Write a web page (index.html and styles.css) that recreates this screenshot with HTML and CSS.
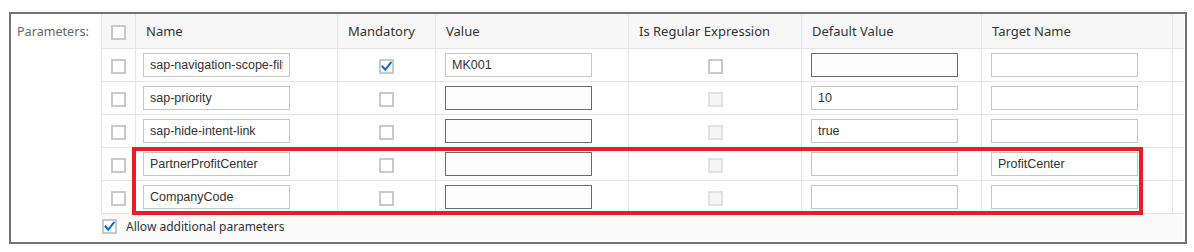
FILE: index.html
```html
<!DOCTYPE html>
<html lang="en">
<head>
    <meta charset="UTF-8">
    <title>Parameters</title>
    <link rel="stylesheet" href="styles.css">
</head>
<body>
    <div class="frame">
        <div class="label">Parameters:</div>

        <div class="section">
            <table class="params">
                <colgroup>
                    <col class="w-sel">
                    <col class="w-name">
                    <col class="w-mand">
                    <col class="w-value">
                    <col class="w-regex">
                    <col class="w-default">
                    <col class="w-target">
                    <col class="w-pad">
                </colgroup>
                <thead>
                    <tr>
                        <th class="c-sel"><span class="cb"></span></th>
                        <th>Name</th>
                        <th>Mandatory</th>
                        <th>Value</th>
                        <th>Is Regular Expression</th>
                        <th>Default Value</th>
                        <th>Target Name</th>
                        <th class="c-pad"></th>
                    </tr>
                </thead>
                <tbody>
                    <tr>
                        <td class="c-sel"><span class="cb"></span></td>
                        <td class="c-name"><input class="field" type="text" value="sap-navigation-scope-filter"></td>
                        <td class="c-center"><span class="cb checked"><svg viewBox="0 0 11 11"><path d="M1.5 5.5 L4.3 8.6 L9.8 1.6"/></svg></span></td>
                        <td><input class="field" type="text" value="MK001"></td>
                        <td class="c-center"><span class="cb"></span></td>
                        <td><input class="field empty" type="text" value=""></td>
                        <td><input class="field" type="text" value=""></td>
                        <td class="c-pad"></td>
                    </tr>
                    <tr>
                        <td class="c-sel"><span class="cb"></span></td>
                        <td class="c-name"><input class="field" type="text" value="sap-priority"></td>
                        <td class="c-center"><span class="cb"></span></td>
                        <td><input class="field empty" type="text" value=""></td>
                        <td class="c-center"><span class="cb disabled"></span></td>
                        <td><input class="field" type="text" value="10"></td>
                        <td><input class="field" type="text" value=""></td>
                        <td class="c-pad"></td>
                    </tr>
                    <tr>
                        <td class="c-sel"><span class="cb"></span></td>
                        <td class="c-name"><input class="field" type="text" value="sap-hide-intent-link"></td>
                        <td class="c-center"><span class="cb"></span></td>
                        <td><input class="field empty" type="text" value=""></td>
                        <td class="c-center"><span class="cb disabled"></span></td>
                        <td><input class="field" type="text" value="true"></td>
                        <td><input class="field" type="text" value=""></td>
                        <td class="c-pad"></td>
                    </tr>
                    <tr>
                        <td class="c-sel"><span class="cb"></span></td>
                        <td class="c-name"><input class="field" type="text" value="PartnerProfitCenter"></td>
                        <td class="c-center"><span class="cb"></span></td>
                        <td><input class="field empty" type="text" value=""></td>
                        <td class="c-center"><span class="cb disabled"></span></td>
                        <td><input class="field" type="text" value=""></td>
                        <td><input class="field" type="text" value="ProfitCenter"></td>
                        <td class="c-pad"></td>
                    </tr>
                    <tr>
                        <td class="c-sel"><span class="cb"></span></td>
                        <td class="c-name"><input class="field" type="text" value="CompanyCode"></td>
                        <td class="c-center"><span class="cb"></span></td>
                        <td><input class="field empty" type="text" value=""></td>
                        <td class="c-center"><span class="cb disabled"></span></td>
                        <td><input class="field" type="text" value=""></td>
                        <td><input class="field" type="text" value=""></td>
                        <td class="c-pad"></td>
                    </tr>
                </tbody>
            </table>

            <div class="params-footer">
                <span class="cb checked"><svg viewBox="0 0 11 11"><path d="M1.5 5.5 L4.3 8.6 L9.8 1.6"/></svg></span>
                <span class="footer-text">Allow additional parameters</span>
            </div>

            <!-- Marco rojo sobre las filas nuevas -->
            <div class="highlight"></div>
        </div>
    </div>
</body>
</html>
```

FILE: styles.css
```css
* {
    box-sizing: border-box;
}

body {
    margin: 0;
    padding: 12px 0 0 9px;
    background: #fff;
    font-family: "Noto Sans", "Open Sans", Arial, sans-serif;
    color: #333;
}

.frame {
    display: flex;
    width: 1178px;
    border: 2px solid #737373;
    padding: 0 2px 2px 0;
}

.label {
    width: 90px;
    flex: none;
    padding-left: 6px;
    line-height: 36px;
    font-size: 12.6px;
    color: #666;
}

.section {
    position: relative;
    width: 1082px;
}

/* Tabla de parámetros */
.params {
    width: 1082px;
    border-collapse: collapse;
    table-layout: fixed;
}

.w-sel { width: 34px; }
.w-name { width: 202px; }
.w-mand { width: 98px; }
.w-value { width: 193px; }
.w-regex { width: 173px; }
.w-default { width: 180px; }
.w-target { width: 191px; }
.w-pad { width: 11px; }

.params th,
.params td {
    border: 1px solid #e5e5e5;
    padding: 0 0 0 9px;
    text-align: left;
    white-space: nowrap;
}

.params th {
    height: 34px;
    border-top: none;
    background: #f7f7f7;
    font-size: 13px;
    font-weight: normal;
    color: #333;
    padding-left: 10px;
}

.params td {
    height: 33px;
    background: #fff;
}

.params .c-sel,
.params .c-center {
    padding: 0;
    text-align: center;
}

.params .c-name {
    padding-left: 7px;
}

.params .c-pad {
    border-right: none;
    padding: 0;
}

.field {
    display: block;
    width: 147px;
    height: 24px;
    margin: 0;
    padding: 0 6px;
    border: 1px solid #c6c6c6;
    background: #fff;
    font-family: "Liberation Sans", Arial, sans-serif;
    font-size: 12.5px;
    color: #333;
    outline: none;
}

.field.empty {
    border-color: #6b6b6b;
    background: #fdfdfd;
}

/* Checkbox */
.cb {
    display: inline-block;
    width: 15px;
    height: 15px;
    border: 2px solid #c9c9c9;
    background: #fff;
    vertical-align: middle;
    position: relative;
}

.cb.disabled {
    border-color: #e2e2e2;
    background: #f5f5f5;
}

.cb svg {
    position: absolute;
    left: 0;
    top: 0;
    width: 11px;
    height: 11px;
    fill: none;
    stroke: #0a6ed1;
    stroke-width: 2;
    stroke-linecap: square;
}

.params-footer {
    display: flex;
    align-items: center;
    height: 26px;
    background: #fafafa;
    padding-left: 1px;
}

.footer-text {
    margin-left: 9px;
    font-size: 12px;
    color: #333;
}

.highlight {
    position: absolute;
    left: 31px;
    top: 133px;
    width: 1011px;
    height: 68px;
    border: 4px solid #ec1c24;
    pointer-events: none;
}
```
